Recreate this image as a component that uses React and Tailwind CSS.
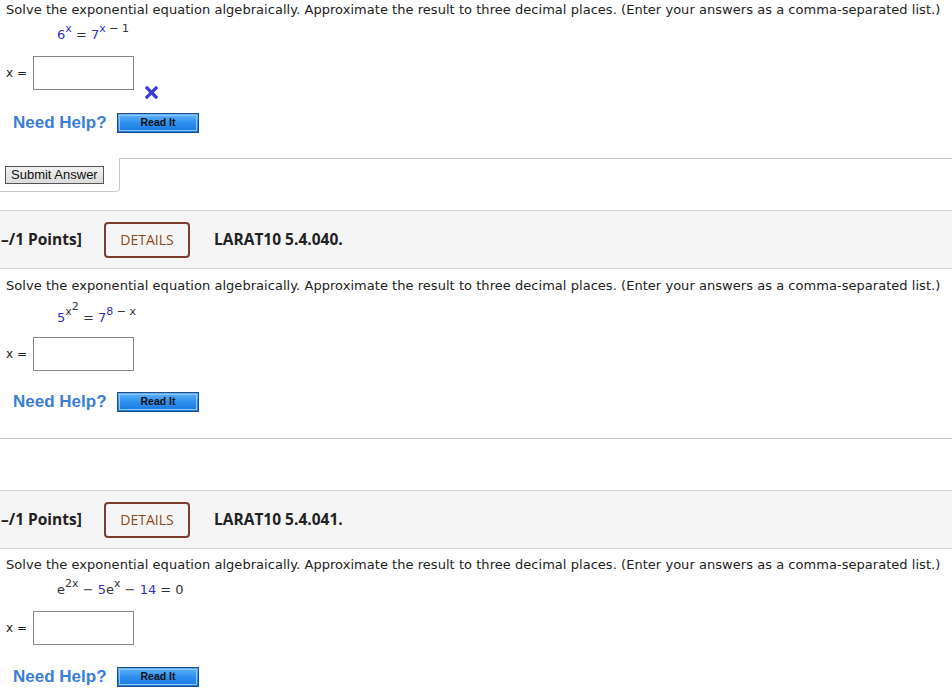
import React from 'react';

const verdana = { fontFamily: '"DejaVu Sans", Verdana, sans-serif' };

const QUESTION =
  'Solve the exponential equation algebraically. Approximate the result to three decimal places. (Enter your answers as a comma-separated list.)';

function Blue({ children }) {
  return <span className="text-[#3131c8]">{children}</span>;
}

function Sup({ children, className = '' }) {
  return <span className={`relative -top-[7px] text-[11px] leading-none ${className}`}>{children}</span>;
}

function QuestionText() {
  return (
    <p className="pl-[6px] text-[13px] leading-4 tracking-[0.04px] text-[#222] whitespace-nowrap font-['DejaVu_Sans',Verdana,sans-serif]">
      {QUESTION}
    </p>
  );
}

function AnswerRow({ wrong }) {
  return (
    <div className="flex items-start pl-[6px]">
      <span className="w-[27px] text-[12px] leading-[34px] text-[#222] font-['DejaVu_Sans',Verdana,sans-serif]">x =</span>
      <div className="w-[101px] h-[34px] border border-[#888] bg-white" />
      {wrong && (
        <svg className="ml-[11px] mt-[30px]" width="13" height="13" viewBox="0 0 13 13">
          <path d="M2 2 L11 11 M11 2 L2 11" stroke="#3b3bdc" strokeWidth="3.2" strokeLinecap="square" />
        </svg>
      )}
    </div>
  );
}

function NeedHelp() {
  return (
    <div className="flex items-center h-[20px] pl-[13px]">
      <span className="w-[104px] text-[17px] font-bold text-[#3b7dd6] font-['Liberation_Sans',Arial,sans-serif]">
        Need Help?
      </span>
      <button className="w-[82px] h-[20px] border border-[#234f86] bg-gradient-to-b from-[#5fb2f7] via-[#2d8ff0] to-[#1c78de] p-[1px]">
        <span className="flex h-full items-center justify-center border border-[#8cc8fb] text-[10.5px] font-bold text-[#111] font-['Liberation_Sans',Arial,sans-serif]">
          Read It
        </span>
      </button>
    </div>
  );
}

function Band({ code }) {
  return (
    <div className="flex items-center h-[59px] border-y border-[#d6d6d6] bg-[#f5f5f5] font-['Open_Sans',sans-serif]">
      <span className="w-[104px] pl-[1px] text-[15.5px] font-bold text-[#222]">–/1 Points]</span>
      <div className="flex items-center justify-center w-[86px] h-[36px] rounded-[4px] border-2 border-[#7b3f2f] text-[14px] text-[#8a4a22]">
        DETAILS
      </div>
      <span className="ml-[24px] text-[15.5px] font-bold text-[#222]">{code}</span>
    </div>
  );
}

export default function App() {
  return (
    <div className="w-[952px] h-[691px] overflow-hidden bg-white">
      {/* question 1 */}
      <div className="pt-[2px]">
        <QuestionText />
        <div className="mt-[7px] ml-[57px] h-[20px] text-[13px] leading-5 text-[#333]" style={verdana}>
          <Blue>6</Blue>
          <Sup><Blue>x</Blue></Sup> = <Blue>7</Blue>
          <Sup><Blue>x</Blue> − 1</Sup>
        </div>
        <div className="mt-[11px]">
          <AnswerRow wrong />
        </div>
        <div className="mt-[14px]">
          <NeedHelp />
        </div>
        <div className="mt-[25px] flex h-[34px]">
          <div className="w-[120px] border-b border-r border-[#c8c8c8] rounded-br-[4px] flex items-center pl-[5px]">
            <button className="h-[18px] px-[5px] border border-[#555] bg-gradient-to-b from-[#f0f0f0] to-[#dcdcdc] text-[13px] leading-4 text-[#111] font-['Liberation_Sans',Arial,sans-serif]">
              Submit Answer
            </button>
          </div>
          <div className="flex-1 border-t border-[#c8c8c8]" />
        </div>
      </div>

      {/* question 2 */}
      <div className="mt-[18px]">
        <Band code="LARAT10 5.4.040." />
        <div className="mt-[9px]">
          <QuestionText />
        </div>
        <div className="mt-[10px] ml-[57px] h-[24px] pt-[4px] text-[13px] leading-5 text-[#333]" style={verdana}>
          <Blue>5</Blue>
          <Sup>x<span className="relative -top-[5px]">2</span></Sup> = <Blue>7</Blue>
          <Sup><Blue>8</Blue> − x</Sup>
        </div>
        <div className="mt-[9px]">
          <AnswerRow />
        </div>
        <div className="mt-[21px]">
          <NeedHelp />
        </div>
        <div className="mt-[26px] h-[52px] border-t border-[#c8c8c8]" />
      </div>

      {/* question 3 */}
      <div>
        <Band code="LARAT10 5.4.041." />
        <div className="mt-[8px]">
          <QuestionText />
        </div>
        <div className="mt-[7px] ml-[57px] h-[20px] text-[13px] leading-5 text-[#333]" style={verdana}>
          e<Sup>2x</Sup> − <Blue>5</Blue>e<Sup>x</Sup> − <Blue>14</Blue> = 0
        </div>
        <div className="mt-[11px]">
          <AnswerRow />
        </div>
        <div className="mt-[22px]">
          <NeedHelp />
        </div>
      </div>
    </div>
  );
}
